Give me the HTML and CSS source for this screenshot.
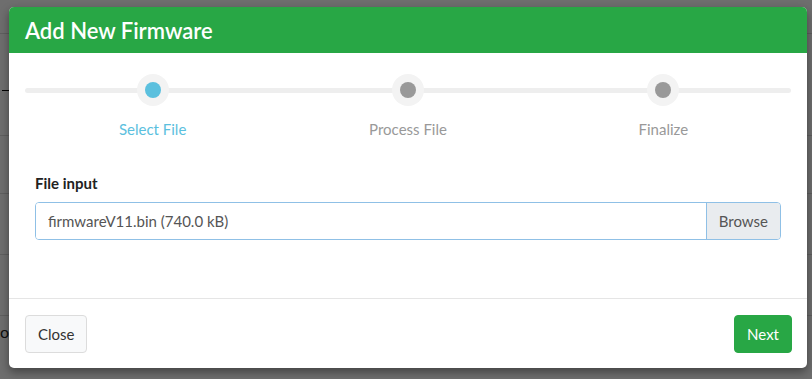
FILE: index.html
```html
<!DOCTYPE html>
<html lang="en">
<head>
    <meta charset="UTF-8">
    <meta name="viewport" content="width=device-width, initial-scale=1.0">
    <title>Add New Firmware</title>
    <link rel="stylesheet" href="styles.css">
</head>
<body>

    <!-- page behind the dialog -->
    <div class="page">
        <div class="page-row row-a"></div>
        <div class="page-row row-b"><span class="dash"></span></div>
        <div class="page-row row-c"></div>
        <div class="page-row row-d"></div>
        <div class="page-row row-e"></div>
        <div class="page-row row-f">o</div>
    </div>

    <div class="backdrop"></div>

    <div class="modal">
        <div class="modal-header">
            <h2>Add New Firmware</h2>
        </div>

        <div class="modal-body">
            <div class="stepper">
                <div class="step active">
                    <div class="step-dot"><span></span></div>
                    <div class="step-label">Select File</div>
                </div>
                <div class="step">
                    <div class="step-dot"><span></span></div>
                    <div class="step-label">Process File</div>
                </div>
                <div class="step">
                    <div class="step-dot"><span></span></div>
                    <div class="step-label">Finalize</div>
                </div>
            </div>

            <div class="form-group">
                <label for="firmware">File input</label>
                <div class="file-input">
                    <input type="text" id="firmware" value="firmwareV11.bin (740.0 kB)" readonly>
                    <span class="browse">Browse</span>
                </div>
            </div>
        </div>

        <div class="modal-footer">
            <button class="btn btn-light">Close</button>
            <button class="btn btn-success">Next</button>
        </div>
    </div>

</body>
</html>
```

FILE: styles.css
```css
/* General Styling */
body {
    margin: 0;
    font-family: Lato, "Open Sans", sans-serif;
    background-color: #fff;
    height: 379px;
    overflow: hidden;
}

/* page underneath */
.page {
    height: 379px;
}

.page-row {
    border-bottom: 1px solid #ddd;
    font-size: 16px;
    color: #222;
}

.row-a { height: 33px; }
.row-b { height: 101px; position: relative; }
.row-c { height: 57px; }
.row-d { height: 60px; }
.row-e { height: 60px; }
.row-f { border: none; padding-top: 6px; }

.dash {
    position: absolute;
    left: 2px;
    top: 56px;
    width: 7px;
    height: 1px;
    background: #000;
}

.backdrop {
    position: absolute;
    top: 0;
    left: 0;
    right: 0;
    bottom: 0;
    background: rgba(0, 0, 0, 0.57);
}

/* Modal */
.modal {
    position: absolute;
    top: 7px;
    left: 9px;
    width: 798px;
    height: 361px;
    background: white;
    border-radius: 5px;
    overflow: hidden;
    display: flex;
    flex-direction: column;
    box-shadow: 0px 4px 10px rgba(0, 0, 0, 0.4);
}

.modal-header {
    background-color: #28a745;
    height: 46px;
    padding: 0 16px;
    display: flex;
    align-items: center;
}

.modal-header h2 {
    margin: 0;
    color: white;
    font-size: 22px;
    font-weight: 600;
}

.modal-body {
    flex: 1;
    padding: 21px 16px 0;
}

/* Stepper */
.stepper {
    display: flex;
    position: relative;
}

.stepper::before {
    content: "";
    position: absolute;
    left: 0;
    right: 0;
    top: 14px;
    height: 5px;
    border-radius: 3px;
    background: #eeeeee;
}

.step {
    flex: 1;
    display: flex;
    flex-direction: column;
    align-items: center;
    position: relative;
}

.step-dot {
    width: 32px;
    height: 32px;
    border-radius: 50%;
    background: #f3f3f3;
    display: flex;
    align-items: center;
    justify-content: center;
}

.step-dot span {
    width: 16px;
    height: 16px;
    border-radius: 50%;
    background: #999;
}

.step.active .step-dot span {
    background: #5bc0de;
}

.step-label {
    margin-top: 14px;
    font-size: 15px;
    color: #999;
}

.step.active .step-label {
    color: #5bc0de;
}

/* Form */
.form-group {
    margin-top: 36px;
    padding: 0 10px;
}

label {
    display: block;
    font-size: 15px;
    font-weight: bold;
    color: #222;
    margin-bottom: 10px;
}

.file-input {
    display: flex;
    border: 1px solid #8fc0e6;
    border-radius: 4px;
    overflow: hidden;
    height: 36px;
}

.file-input input {
    flex: 1;
    border: none;
    outline: none;
    padding: 0 12px;
    font-family: inherit;
    font-size: 15px;
    color: #555;
}

.browse {
    display: flex;
    align-items: center;
    padding: 0 12px;
    background: #e9ecef;
    border-left: 1px solid #8fc0e6;
    font-size: 15px;
    color: #555;
}

/* Footer */
.modal-footer {
    border-top: 1px solid #e5e5e5;
    padding: 16px 15px 15px 16px;
    display: flex;
    justify-content: space-between;
    align-items: center;
}

.btn {
    height: 38px;
    padding: 0 12px;
    border-radius: 4px;
    font-family: inherit;
    font-size: 15px;
    cursor: pointer;
}

.btn-light {
    background: #f8f9fa;
    border: 1px solid #dcdcdc;
    color: #333;
}

.btn-success {
    background: #28a745;
    border: 1px solid #28a745;
    color: white;
}
```
